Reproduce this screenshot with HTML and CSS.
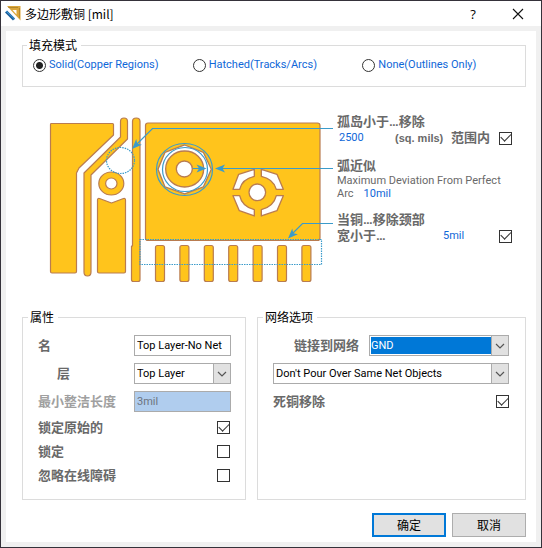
FILE: index.html
```
<!DOCTYPE html>
<html lang="zh-CN">
<head>
<meta charset="utf-8">
<title>多边形敷铜 [mil]</title>
<link rel="stylesheet" href="styles.css">
</head>
<body>
<main class="window">
  <header class="titlebar">
    <svg class="app-icon" width="16" height="16" viewBox="0 0 16 16" aria-hidden="true">
      <path d="M2 0H15.500V14.500Z" fill="#dba63a"/>
      <path d="M7.500 4H11.500V8.500Z" fill="#fff"/>
      <path d="M4 1V2M6 1V2M8 1V2M10 1V2M12 1V2M14 3H15M14 5H15M14 7H15M14 9H15M14 11H15" stroke="#8a6a20"/>
      <path d="M1 5.500L9 13.500" stroke="#1b5f9c" stroke-width="3"/>
      <path d="M1 5L9.500 13" stroke="#3f9bd9" stroke-width="1"/>
    </svg>
    <h1 class="title">多边形敷铜 [mil]</h1>
    <button class="caption-button help" type="button" aria-label="Help">?</button>
    <button class="caption-button" type="button" aria-label="Close">
      <svg width="12" height="12" viewBox="0 0 12 12"><path d="M1 1L11 11M11 1L1 11" stroke="#111" stroke-width="1.1"/></svg>
    </button>
  </header>
  <form class="content">
    <fieldset class="group fill-mode">
      <legend>填充模式</legend>
      <label class="radio"><input type="radio" name="fill" checked>Solid(Copper Regions)</label>
      <label class="radio"><input type="radio" name="fill">Hatched(Tracks/Arcs)</label>
      <label class="radio"><input type="radio" name="fill">None(Outlines Only)</label>
    </fieldset>

    <section class="preview">
      <svg class="diagram" width="311" height="180" viewBox="22 107 311 180" aria-hidden="true">
        <defs>
          <path id="arrow" d="M0 0L-10 -4L-7.500 0L-10 4Z" fill="#3b9bcb"/>
          <rect id="pin" x="155.500" y="245.500" width="9" height="36" rx="2"/>
        </defs>
        <g fill="#ffc41c" stroke="#b97c50" stroke-width="1.200" stroke-linejoin="round">
          <path d="M51 123.500H112.500Q113.500 123.500 113.500 124.500V135L79 168L76.500 173V271.500Q76.500 273 75 273H52Q50.500 273 50.500 271.500V124.500Q50.500 123.500 51 123.500Z"/>
          <path d="M120.500 121.500Q120.500 118 124 118Q127.500 118 127.500 121.500V139L91 175V272Q91 276 87.500 276Q84 276 84 272V173L120.500 137Z"/>
          <path d="M132.500 121.500Q132.500 118 136.300 118Q140 118 140 121.500V279.500Q140 281.500 138 281.500H133.500Q131.500 281.500 131.500 279.500V246H132.500Z"/>
          <path fill-rule="evenodd" d="M123.800 183.500A12.500 11.500 0 1 1 98.800 183.500A12.500 11.500 0 1 1 123.800 183.500ZM117 183.500A5.700 5.500 0 1 0 105.600 183.500A5.700 5.500 0 1 0 117 183.500Z"/>
          <path d="M97.500 200Q97.500 198 99.500 198.500L111.500 203L123.500 198.500Q125.500 198 125.500 200V271.500Q125.500 273 124 273H99Q97.500 273 97.500 271.500Z"/>
          <rect x="145.500" y="123" width="174.500" height="117.500" rx="2.500"/>
          <use href="#pin"/><use href="#pin" x="24.400"/><use href="#pin" x="48.800"/><use href="#pin" x="73.200"/>
          <use href="#pin" x="97.600"/><use href="#pin" x="122"/><use href="#pin" x="146.400"/>
        </g>
        <g transform="translate(140 105) scale(.3333)" fill="#fff" stroke="#b97c50" stroke-width="4" stroke-linejoin="round">
          <path d="M134 120L190 142L214 193L190 246L134 267L75 246L54 193L75 142Z"/>
          <ellipse cx="134" cy="192" rx="57" ry="54" fill="#ffc41c"/>
          <circle cx="133" cy="192" r="24"/>
          <circle cx="352" cy="262" r="25"/>
          <path d="M343 193L296 208L279 253H299Q306 222 343 214Z"/>
          <path d="M364 193L411 208L430 253H409Q401 222 364 214Z"/>
          <path d="M343 333L298 317L279 272H299Q306 305 343 314Z"/>
          <path d="M364 333L411 317L430 272H409Q401 305 364 314Z"/>
        </g>
        <g fill="none" stroke="#3b9bcb" stroke-width="1.200">
          <ellipse cx="184.500" cy="169.500" rx="28" ry="26"/>
          <ellipse cx="185" cy="169.500" rx="22.500" ry="22"/>
          <path d="M333 128.500H152.500L136 145M333 168.500H220M193 168.500H202M333 223.500H302.500L291 235"/>
          <ellipse cx="120.500" cy="160.500" rx="14" ry="13" stroke-dasharray="1.500 1"/>
          <path d="M140 239.500H321.500V264.500H140Z" stroke-dasharray="1.500 1"/>
        </g>
        <use href="#arrow" transform="translate(132 149) rotate(135)"/>
        <use href="#arrow" transform="translate(206.500 168.500)"/>
        <use href="#arrow" transform="translate(215 168.500) rotate(180)"/>
        <use href="#arrow" transform="translate(288 238.500) rotate(135)"/>
      </svg>
      <div class="rules">
        <div class="rule">
          <label class="caption" for="island">孤岛小于…移除</label>
          <div class="rule-line">
            <input class="value island" id="island" type="text" value="2500">
            <span class="unit">(sq. mils)</span>
            <label class="caption" for="island-on">范围内</label>
            <input class="check" id="island-on" type="checkbox" checked>
          </div>
        </div>
        <div class="rule">
          <div class="caption">弧近似</div>
          <label class="note" for="arc">Maximum Deviation From Perfect</label>
          <div class="note-line">
            <label class="note" for="arc">Arc</label>
            <input class="value arc" id="arc" type="text" value="10mil">
          </div>
        </div>
        <div class="rule">
          <label class="caption" for="neck-on">当铜…移除颈部</label>
          <div class="rule-line">
            <label class="caption" for="neck">宽小于…</label>
            <input class="value neck" id="neck" type="text" value="5mil">
            <input class="check" id="neck-on" type="checkbox" checked>
          </div>
        </div>
      </div>
    </section>

    <div class="groups">
      <fieldset class="group">
        <legend>属性</legend>
        <div class="row"><label for="name">名</label><input class="box" id="name" type="text" value="Top Layer-No Net"></div>
        <div class="row"><label class="indent" for="layer">层</label>
          <div class="combo"><select class="box" id="layer"><option>Top Layer</option></select><span class="drop"><svg width="10" height="6" viewBox="0 0 10 6"><path d="M1 1L5 5L9 1"/></svg></span></div>
        </div>
        <div class="row disabled"><label for="length">最小整洁长度</label><input class="box" id="length" type="text" value="3mil" disabled></div>
        <div class="row option"><label for="lock-prim">锁定原始的</label><input class="check" id="lock-prim" type="checkbox" checked></div>
        <div class="row option"><label for="lock">锁定</label><input class="check" id="lock" type="checkbox"></div>
        <div class="row option"><label for="ignore">忽略在线障碍</label><input class="check" id="ignore" type="checkbox"></div>
      </fieldset>
      <fieldset class="group network">
        <legend>网络选项</legend>
        <div class="row net"><label for="net">链接到网络</label>
          <div class="combo net-combo"><select class="box selected" id="net"><option>GND</option></select><span class="drop"><svg width="10" height="6" viewBox="0 0 10 6"><path d="M1 1L5 5L9 1"/></svg></span></div>
        </div>
        <div class="row">
          <div class="combo full"><select class="box" aria-label="Pour"><option>Don't Pour Over Same Net Objects</option></select><span class="drop"><svg width="10" height="6" viewBox="0 0 10 6"><path d="M1 1L5 5L9 1"/></svg></span></div>
        </div>
        <div class="row"><label for="dead">死铜移除</label><input class="check" id="dead" type="checkbox" checked></div>
      </fieldset>
    </div>

    <footer class="actions">
      <button class="button primary" type="submit">确定</button>
      <button class="button" type="button">取消</button>
    </footer>
  </form>
</main>
</body>
</html>
```
FILE: styles.css
```
* { box-sizing: border-box; }
body {
  margin: 0;
  font: 11px/16px Roboto, "Noto Sans CJK SC", sans-serif;
  color: #000;
}
input, select, button { font: inherit; margin: 0; }
svg { display: block; }
.window {
  display: flex;
  flex-direction: column;
  min-height: 100vh;
  border: 1px solid #35323a;
  background: #f0f0f0;
}
.titlebar {
  display: flex;
  align-items: center;
  height: 25px;
  padding: 0 11px 0 4px;
  background: #fff;
}
.title {
  flex: 1;
  margin: 0 0 0 4px;
  font: 12px/16px "Noto Sans CJK SC", sans-serif;
}
.caption-button {
  display: grid;
  place-items: center;
  width: 24px;
  height: 24px;
  padding: 0;
  border: 0;
  background: none;
}
.help { margin-right: 21px; font: 13px/16px "Open Sans", sans-serif; }
.content {
  flex: 1;
  display: flex;
  flex-direction: column;
  margin: 5px;
  padding: 6px 10px 5px 16px;
  background: #fff;
}
.group {
  min-width: 0;
  margin: 0;
  border: 1px solid #dcdcdc;
}
.group legend {
  margin-left: -10px;
  padding: 0 4px 0 2px;
  font: 12px/16px "Noto Sans CJK SC", sans-serif;
}
.fill-mode {
  display: grid;
  grid-template-columns: 160fr 170fr 153fr;
  height: 50px;
  padding: 4px 10px 0;
}
.fill-mode legend { margin-left: -6px; }
.radio {
  display: flex;
  align-items: center;
  gap: 3px;
  height: 16px;
  color: #0f67d8;
}
.radio input {
  appearance: none;
  width: 13px;
  height: 13px;
  border: 1px solid #333;
  border-radius: 50%;
  background: #fff;
}
.radio input:checked { background: radial-gradient(circle, #222 0 3px, #fff 4px); }
.preview {
  display: grid;
  grid-template-columns: 311px 1fr;
  gap: 4px;
  margin-top: 20px;
}
.rules {
  display: flex;
  flex-direction: column;
  gap: 12px;
  padding: 7px 14px 0 0;
  color: #696969;
}
.caption { display: block; font: bold 13px/16px Roboto, "Noto Sans CJK SC", sans-serif; white-space: nowrap; }
.rule-line { display: flex; align-items: center; height: 16px; }
.value {
  border: 0;
  padding: 0;
  background: none;
  color: #0f67d8;
  height: 13px;
}
.island { width: 56px; margin: 0 0 0 2px; }
.unit { flex: 1; font: bold 11px/16px "Liberation Sans", sans-serif; }
.arc { width: 60px; }
.neck { width: 40px; margin-left: auto; margin-right: 7px; }
.note { display: block; line-height: 13px; white-space: nowrap; }
.note-line { display: flex; gap: 10px; }
.check {
  appearance: none;
  flex: none;
  width: 13px;
  height: 13px;
  border: 1px solid #333;
  background: #fff;
  display: grid;
  place-items: center;
}
.check:checked::before {
  content: "";
  width: 9px;
  height: 5px;
  border: solid #333;
  border-width: 0 0 1px 1px;
  transform: translateY(-2px) rotate(-45deg);
}
.rule-line .check { margin-left: 9px; }
.groups {
  display: grid;
  grid-template-columns: 224fr 269fr;
  gap: 11px;
  margin-top: 22px;
}
.groups .group { height: 191px; padding: 10px 14px 0 15px; }
.groups .network { padding-right: 16px; }
.row {
  display: flex;
  align-items: center;
  justify-content: space-between;
  height: 21px;
  margin-bottom: 7px;
  font-size: 13px;
  font-weight: bold;
  color: #696969;
}
.row.option { height: 17px; padding-right: 1px; }
.disabled { color: #a0a0a0; }
.indent { margin-left: 19px; }
.box {
  width: 97px;
  height: 21px;
  padding: 0 2px;
  border: 1px solid #ababab;
  border-radius: 0;
  background: #fff;
  color: #000;
  font-size: 11px;
  font-weight: normal;
}
.box:disabled { background: #b0cdee; color: #6d7480; }
.combo { display: grid; width: 97px; }
.combo > * { grid-area: 1 / 1; }
.combo .box { appearance: none; width: 100%; }
.net-combo { width: 140px; }
.full { width: 100%; }
.drop {
  justify-self: end;
  display: grid;
  place-items: center;
  width: 18px;
  height: 21px;
  border: 1px solid #ababab;
  background: #e1e1e1;
  pointer-events: none;
}
.drop path { fill: none; stroke: #555; stroke-width: 1.2; }
.net { justify-content: flex-end; gap: 10px; }
.combo .selected {
  padding: 1px;
  background: linear-gradient(#0078d7, #0078d7) content-box, #fff;
  color: #fff;
}
.actions {
  display: flex;
  justify-content: flex-end;
  gap: 6px;
  margin-top: 13px;
}
.button {
  width: 74px;
  height: 24px;
  padding: 0;
  border: 1px solid #adadad;
  background: #e1e1e1;
  font: 12px/16px "Noto Sans CJK SC", sans-serif;
}
.primary { border: 2px solid #0078d7; }
```
